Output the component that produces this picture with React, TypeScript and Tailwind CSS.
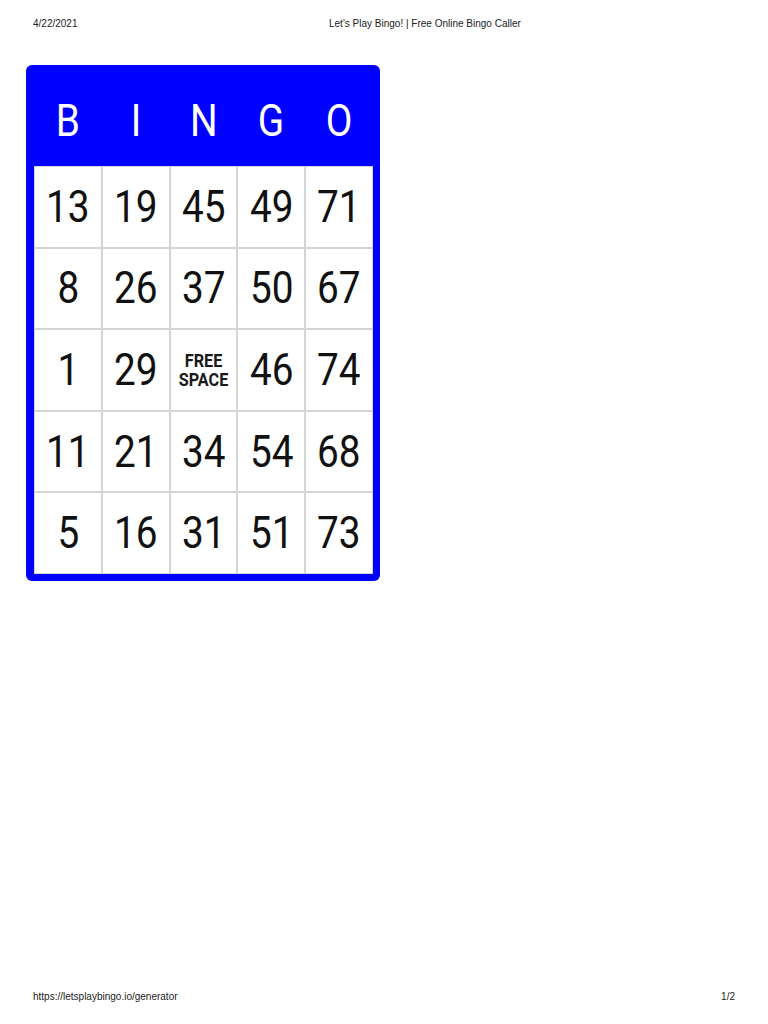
const letters = ["B", "I", "N", "G", "O"];

const rows: (number | null)[][] = [
  [13, 19, 45, 49, 71],
  [8, 26, 37, 50, 67],
  [1, 29, null, 46, 74],
  [11, 21, 34, 54, 68],
  [5, 16, 31, 51, 73],
];

const Cell = ({ value }: { value: number | null }) => (
  <div className="flex items-center justify-center bg-white border border-[#d4d4d4]">
    {value === null ? (
      <span className="inline-block scale-x-[0.9] text-center text-[18px] leading-[19px] font-bold text-[#1a1a1a] font-['Roboto',sans-serif]">
        FREE
        <br />
        SPACE
      </span>
    ) : (
      <span className="inline-block scale-x-[0.88] text-[44px] leading-[44px] text-[#111] font-['Roboto',sans-serif]">
        {value}
      </span>
    )}
  </div>
);

export default function App() {
  return (
    <div className="w-[768px] h-[1024px] bg-white flex flex-col font-['Liberation_Sans',Arial,sans-serif] text-[#222]">
      <header className="flex mt-[18px] h-[12px] text-[10px] leading-[12px] px-[33px]">
        <span className="w-[296px]">4/22/2021</span>
        <span>Let's Play Bingo! | Free Online Bingo Caller</span>
      </header>

      <div className="mt-[35px] ml-[26px] w-[354px] bg-[#0000fe] rounded-[6px] pl-[8px] pr-[7px] pb-[7px]">
        <div className="grid grid-cols-5 h-[101px] pt-[34px]">
          {letters.map((l) => (
            <div key={l} className="flex justify-center">
              <span className="inline-block scale-x-[0.88] text-[44px] leading-[44px] text-white font-['Roboto',sans-serif]">
                {l}
              </span>
            </div>
          ))}
        </div>
        <div className="grid grid-cols-5 grid-rows-5 h-[408px]">
          {rows.map((row, i) =>
            row.map((v, j) => <Cell key={`${i}-${j}`} value={v} />)
          )}
        </div>
      </div>

      <footer className="mt-auto mb-[21px] flex justify-between px-[33px] text-[10px] leading-[12px]">
        <span>https://letsplaybingo.io/generator</span>
        <span>1/2</span>
      </footer>
    </div>
  );
}
